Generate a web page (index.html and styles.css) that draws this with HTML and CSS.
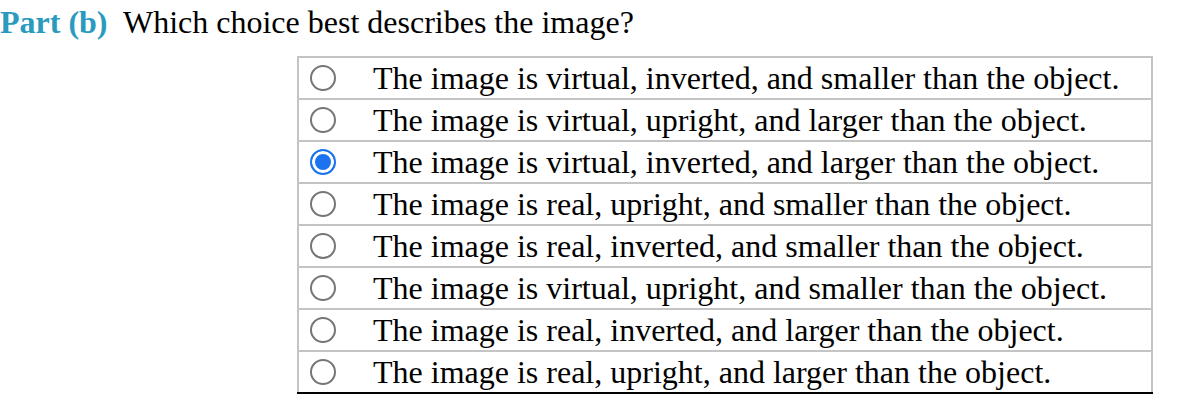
FILE: index.html
```html
<!DOCTYPE html>
<html lang="en">
  <head>
    <meta charset="UTF-8" />
    <meta name="viewport" content="width=device-width, initial-scale=1.0" />
    <title>Part (b)</title>
    <link rel="stylesheet" href="styles.css">
  </head>
  <body>
    <div class="question">
      <h2 class="prompt"><span class="part">Part (b)</span> Which choice best describes the image?</h2>

      <table class="choices">
        <tr>
          <td class="pick"><span class="radio"></span></td>
          <td>The image is virtual, inverted, and smaller than the object.</td>
        </tr>
        <tr>
          <td class="pick"><span class="radio"></span></td>
          <td>The image is virtual, upright, and larger than the object.</td>
        </tr>
        <tr>
          <td class="pick"><span class="radio checked"></span></td>
          <td>The image is virtual, inverted, and larger than the object.</td>
        </tr>
        <tr>
          <td class="pick"><span class="radio"></span></td>
          <td>The image is real, upright, and smaller than the object.</td>
        </tr>
        <tr>
          <td class="pick"><span class="radio"></span></td>
          <td>The image is real, inverted, and smaller than the object.</td>
        </tr>
        <tr>
          <td class="pick"><span class="radio"></span></td>
          <td>The image is virtual, upright, and smaller than the object.</td>
        </tr>
        <tr>
          <td class="pick"><span class="radio"></span></td>
          <td>The image is real, inverted, and larger than the object.</td>
        </tr>
        <tr>
          <td class="pick"><span class="radio"></span></td>
          <td>The image is real, upright, and larger than the object.</td>
        </tr>
      </table>
    </div>
  </body>
</html>
```

FILE: styles.css
```css
body {
  margin: 0;
  padding: 0;
  background-color: #ffffff;
  color: #000;
  font-family: "Liberation Serif", "Times New Roman", serif;
}

.question {
  padding: 0;
}

.prompt {
  margin: 0;
  padding: 4px 0 0 0;
  font-size: 32px;
  font-weight: normal;
  line-height: 36px;
}

.part {
  font-weight: bold;
  color: #2a9bbf;
  margin-right: 8px;
}

.choices {
  margin: 16px 0 0 297px;
  width: 856px;
  border-collapse: collapse;
  border: 2px solid #c4c4c4;
  border-bottom: 2px solid #000;
  font-size: 32px;
}

.choices td {
  height: 40px;
  padding: 0;
  line-height: 40px;
  border-top: 2px solid #c4c4c4;
  vertical-align: middle;
}

.choices td.pick {
  width: 63px;
  padding-left: 11px;
}

.radio {
  display: block;
  width: 22px;
  height: 22px;
  border: 2px solid #767676;
  border-radius: 50%;
  box-sizing: content-box;
}

.radio.checked {
  border-color: #1b73ef;
  background-color: #1b73ef;
  box-shadow: inset 0 0 0 3px #fff;
}
```
